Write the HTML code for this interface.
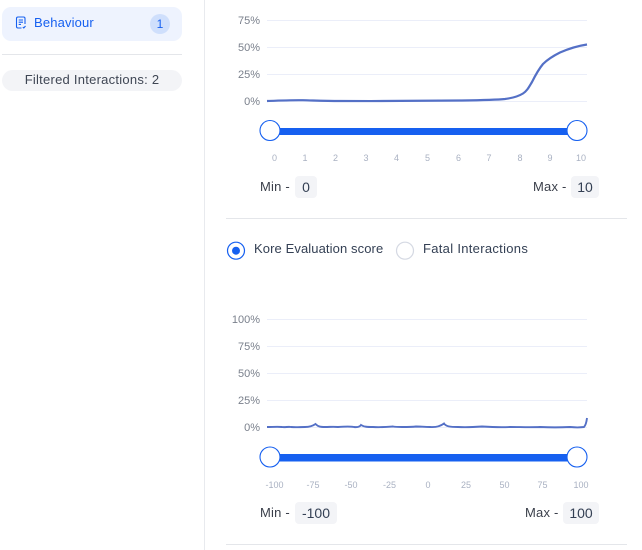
<!DOCTYPE html>
<html><head><meta charset="utf-8"><style>
html,body{margin:0;padding:0;background:#fff}
body{width:642px;height:550px;position:relative;overflow:hidden;font-family:"Liberation Sans",sans-serif}
.t{position:absolute;white-space:nowrap;line-height:16px}
.b{position:absolute;background:#f3f4f7;border-radius:4px;color:#344054;font-size:14px;line-height:22px;text-align:center}
.h{position:absolute;height:1px;background:#e4e6ea}
</style></head><body>
<div style="position:absolute;left:204px;top:0;width:1px;height:550px;background:#e8eaee"></div>
<div style="position:absolute;left:2px;top:7px;width:180px;height:34px;background:#eef3fe;border-radius:9px"></div>
<svg style="position:absolute;left:14px;top:16px" width="14" height="14" viewBox="0 0 14 14" fill="none" stroke="#1660f0" stroke-width="1.100"><path d="M7.500 12H4a1.500 1.500 0 0 1-1.500-1.500V2.500A1.500 1.500 0 0 1 4 1h5.500A1.500 1.500 0 0 1 11 2.500V8M4.700 4H9M4.700 6.200H9M4.700 8.400H7M8.800 11l1 1 1.700-2"/></svg>
<div class="t" style="left:34px;top:15px;font-size:13px;color:#1660f0;letter-spacing:.15px">Behaviour</div>
<div style="position:absolute;left:150px;top:14px;width:20px;height:20px;border-radius:50%;background:#cfdffc;color:#1660f0;font-size:12px;line-height:20px;text-align:center">1</div>
<div class="h" style="left:2px;top:54px;width:180px"></div>
<div style="position:absolute;left:2px;top:70px;width:180px;height:21px;border-radius:11px;background:#f3f4f7;color:#3f4654;font-size:13px;line-height:19px;text-align:center;letter-spacing:.25px">Filtered Interactions: 2</div>

<svg style="position:absolute;left:0;top:0" width="642" height="550" font-family="Liberation Sans, sans-serif">
<g stroke="#ebeef9" stroke-width="1"><path d="M267 20.500H587M267 47.500H587M267 74.500H587M267 101.500H587M267 319.500H587M267 346.500H587M267 373.500H587M267 400.500H587M267 427.500H587"/></g>
<g font-size="11" fill="#7a808c" text-anchor="end">
<text x="260" y="24">75%</text><text x="260" y="51">50%</text><text x="260" y="78">25%</text><text x="260" y="105">0%</text>
<text x="260" y="323">100%</text><text x="260" y="350">75%</text><text x="260" y="377">50%</text><text x="260" y="404">25%</text><text x="260" y="431">0%</text>
</g>
<path fill="none" stroke="#5470c6" stroke-width="2.200" d="M267 101C280 100.500 292 100 303 100.200C315 100.500 325 101 340 101C380 101.200 420 101 460 100.500C480 100.200 495 100 505 99C513 98 519 96 523 93.500C527 91 529 87 532 82C535 76 538 70 543 64C548 59 553 56 560 52.500C568 49 577 46 587 44.500"/>
<path fill="none" stroke="#5470c6" stroke-width="1.900" d="M267 427C272 427 278 426.500 282 427C285 427.500 288 426.500 291 427C296 427.500 300 427 305 427C309 427 312 426.500 315.500 424C318 426.500 320 427 325 427C330 427 333 426.500 338 427C344 426.500 350 426.200 354 427C358 427.500 360 426.500 361 425C364 427 368 427 373 427C380 427.500 386 427 393 426.500C396 427 399 427 402 427C408 427 412 427 416 426.500C420 426.500 425 427 430 427C436 427.500 440 426.500 444 423.500C446 426.500 450 427 458 427C466 427.500 475 427 482 426.500C490 427 500 427.500 510 427C520 427 530 427.500 540 427C550 427.500 560 427.500 570 427C575 427.500 580 427.500 584 427C586 425 586.500 422 587 418"/>
<rect x="270" y="128" width="307" height="7" fill="#1660f0"/><rect x="270" y="454" width="307" height="7.500" fill="#1660f0"/>
<g fill="#fff" stroke="#1660f0" stroke-width="1.100"><circle cx="270" cy="130.500" r="10"/><circle cx="577" cy="130.500" r="10"/><circle cx="270" cy="457" r="10"/><circle cx="577" cy="457" r="10"/></g>
<g font-size="9" fill="#a9b1c2" text-anchor="middle">
<text x="274.500" y="161">0</text><text x="305" y="161">1</text><text x="335.500" y="161">2</text><text x="366" y="161">3</text><text x="396.500" y="161">4</text><text x="427.500" y="161">5</text><text x="458.500" y="161">6</text><text x="489" y="161">7</text><text x="520" y="161">8</text><text x="550" y="161">9</text><text x="581" y="161">10</text>
<text x="274.500" y="488">-100</text><text x="313" y="488">-75</text><text x="351" y="488">-50</text><text x="389.500" y="488">-25</text><text x="428" y="488">0</text><text x="466" y="488">25</text><text x="504.500" y="488">50</text><text x="542.500" y="488">75</text><text x="581" y="488">100</text>
</g>
<circle cx="236" cy="250.700" r="8.500" fill="#fff" stroke="#1660f0" stroke-width="1.200"/><circle cx="236" cy="250.700" r="4" fill="#1660f0"/>
<circle cx="405" cy="250.700" r="8.500" fill="#fff" stroke="#d5d9e3" stroke-width="1.200"/>
</svg>

<div class="t" style="left:260px;top:179px;font-size:13px;color:#3a3f4a;letter-spacing:.2px">Min -</div>
<div class="b" style="left:295px;top:176px;width:22px;height:22px">0</div>
<div class="t" style="left:533px;top:179px;font-size:13px;color:#3a3f4a;letter-spacing:.2px">Max -</div>
<div class="b" style="left:571px;top:176px;width:28px;height:22px">10</div>
<div class="h" style="left:226px;top:218px;width:401px"></div>
<div class="t" style="left:254px;top:241px;font-size:13px;color:#344054;letter-spacing:.1px">Kore Evaluation score</div>
<div class="t" style="left:423px;top:241px;font-size:13px;color:#344054;letter-spacing:.3px">Fatal Interactions</div>
<div class="t" style="left:260px;top:505px;font-size:13px;color:#3a3f4a;letter-spacing:.2px">Min -</div>
<div class="b" style="left:295px;top:502px;width:42px;height:22px">-100</div>
<div class="t" style="left:525px;top:505px;font-size:13px;color:#3a3f4a;letter-spacing:.2px">Max -</div>
<div class="b" style="left:563px;top:502px;width:36px;height:22px">100</div>
<div class="h" style="left:226px;top:544px;width:401px"></div>
</body></html>
